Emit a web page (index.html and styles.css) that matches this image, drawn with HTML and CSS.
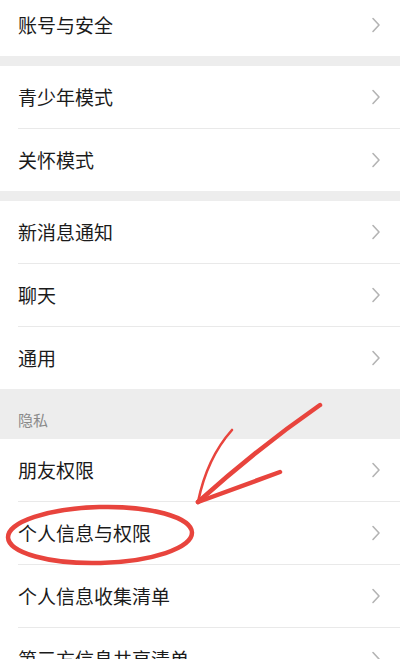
FILE: index.html
```
<!DOCTYPE html>
<html lang="zh-CN">
<head>
<meta charset="utf-8">
<title>设置</title>
<link rel="stylesheet" href="styles.css">
</head>
<body>
<div class="page">
  <div class="group top">
    <div class="row"><span class="label">账号与安全</span><svg class="chev" viewBox="0 0 10 16"><polyline points="2,1.5 8,8 2,14.5"/></svg></div>
  </div>
  <div class="group">
    <div class="row"><span class="label">青少年模式</span><svg class="chev" viewBox="0 0 10 16"><polyline points="2,1.5 8,8 2,14.5"/></svg></div>
    <div class="row"><span class="label">关怀模式</span><svg class="chev" viewBox="0 0 10 16"><polyline points="2,1.5 8,8 2,14.5"/></svg></div>
  </div>
  <div class="group">
    <div class="row"><span class="label">新消息通知</span><svg class="chev" viewBox="0 0 10 16"><polyline points="2,1.5 8,8 2,14.5"/></svg></div>
    <div class="row"><span class="label">聊天</span><svg class="chev" viewBox="0 0 10 16"><polyline points="2,1.5 8,8 2,14.5"/></svg></div>
    <div class="row"><span class="label">通用</span><svg class="chev" viewBox="0 0 10 16"><polyline points="2,1.5 8,8 2,14.5"/></svg></div>
  </div>
  <div class="section-title">隐私</div>
  <div class="group flush">
    <div class="row"><span class="label">朋友权限</span><svg class="chev" viewBox="0 0 10 16"><polyline points="2,1.5 8,8 2,14.5"/></svg></div>
    <div class="row"><span class="label">个人信息与权限</span><svg class="chev" viewBox="0 0 10 16"><polyline points="2,1.5 8,8 2,14.5"/></svg></div>
    <div class="row"><span class="label">个人信息收集清单</span><svg class="chev" viewBox="0 0 10 16"><polyline points="2,1.5 8,8 2,14.5"/></svg></div>
    <div class="row"><span class="label">第三方信息共享清单</span><svg class="chev" viewBox="0 0 10 16"><polyline points="2,1.5 8,8 2,14.5"/></svg></div>
  </div>
  <svg class="annot" viewBox="0 0 400 659">
    <ellipse cx="100" cy="535" rx="92" ry="28" transform="rotate(-1.5 100 535)" class="thick"/>
    <path d="M320,405 Q258,448 198,502" class="thick"/>
    <path d="M232,430 Q207,458 198,502" class="thin"/>
    <path d="M280,472 Q236,488 198,502" class="thick"/>
  </svg>
</div>
</body>
</html>
```

FILE: styles.css
```
html, body {
  margin: 0;
  padding: 0;
  background: #ededed;
}
body {
  font-family: "Noto Sans CJK SC", "Noto Sans", sans-serif;
  width: 400px;
  height: 659px;
  overflow: hidden;
}
.page {
  position: relative;
  width: 400px;
  height: 659px;
  overflow: hidden;
}
.group {
  background: #ffffff;
  margin-bottom: 10px;
}
.group.top {
  margin-top: -6px;
}
.group.flush {
  margin-bottom: 0;
}
.row {
  display: flex;
  align-items: center;
  justify-content: space-between;
  height: 62px;
  margin-left: 18px;
  padding-right: 19px;
}
.row + .row {
  border-top: 1px solid #e9e9e9;
}
.label {
  font-size: 19px;
  line-height: 24px;
  color: #1b1b1b;
}
.chev {
  width: 10px;
  height: 16px;
  fill: none;
  stroke: #b4b4b4;
  stroke-width: 1.6;
  stroke-linecap: round;
  stroke-linejoin: round;
}
.section-title {
  height: 50px;
  margin-top: -10px;
  box-sizing: border-box;
  padding: 21px 0 0 18px;
  font-size: 15px;
  line-height: 20px;
  color: #8a8a8a;
}
.annot {
  position: absolute;
  left: 0;
  top: 0;
  width: 400px;
  height: 659px;
  pointer-events: none;
  fill: none;
  stroke: #e8443d;
  stroke-linecap: round;
}
.annot .thick {
  stroke-width: 4.5;
}
.annot .thin {
  stroke-width: 2.6;
}
```
